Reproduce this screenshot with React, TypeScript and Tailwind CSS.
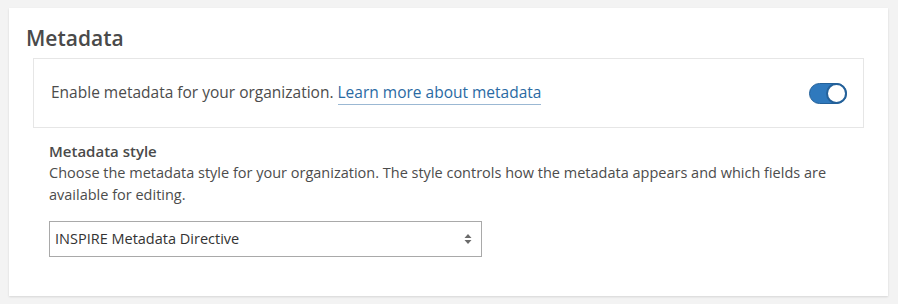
import React from "react";

export default function App() {
  return (
    <div
      className="w-[898px] h-[304px] bg-[#f3f3f3] pt-[8px] pl-[9px] pr-[10px] pb-[8px]"
      style={{ fontFamily: "'Open Sans', 'Noto Sans', sans-serif" }}
    >
      <div className="h-[288px] bg-white shadow-[0_1px_2px_rgba(0,0,0,0.12)]">
        <h2 className="pl-[17px] pt-[15px] text-[21px] leading-[30px] font-semibold text-[#4a4a4a]">
          Metadata
        </h2>
        <div className="mx-[24px] mt-[5px] h-[70px] border border-[#e6e6e6] flex items-center justify-between pl-[17px] pr-[16px]">
          <p className="text-[15.5px] text-[#4c4c4c] pb-[1px]">
            Enable metadata for your organization.{" "}
            <a className="text-[#2a6aa3] border-b border-[#9bb8d3] pb-[1px]">
              Learn more about metadata
            </a>
          </p>
          <div className="w-[38px] h-[21px] rounded-full bg-[#2f79bd] border border-[#24619a] relative">
            <div className="absolute right-[-1px] top-[-1px] w-[21px] h-[21px] rounded-full bg-white border-[2px] border-[#24619a]" />
          </div>
        </div>
        <div className="pl-[40px] pr-[40px] pt-[12px]">
          <div className="text-[15px] leading-[22px] font-semibold text-[#4a4a4a]">Metadata style</div>
          <p className="text-[14.5px] leading-[22px] text-[#4c4c4c]">
            Choose the metadata style for your organization. The style controls how the metadata appears and which
            fields are available for editing.
          </p>
          <div className="mt-[15px] w-[433px] h-[36px] border border-[#a9a9a9] flex items-center justify-between pl-[5px] pr-[9px]">
            <span className="text-[14.5px] text-[#333333]">INSPIRE Metadata Directive</span>
            <svg width="8" height="12" viewBox="0 0 8 12">
              <path d="M4 1 L7.5 5 H0.5 Z" fill="#6b6b6b" />
              <path d="M4 11 L7.5 7 H0.5 Z" fill="#6b6b6b" />
            </svg>
          </div>
        </div>
      </div>
    </div>
  );
}
